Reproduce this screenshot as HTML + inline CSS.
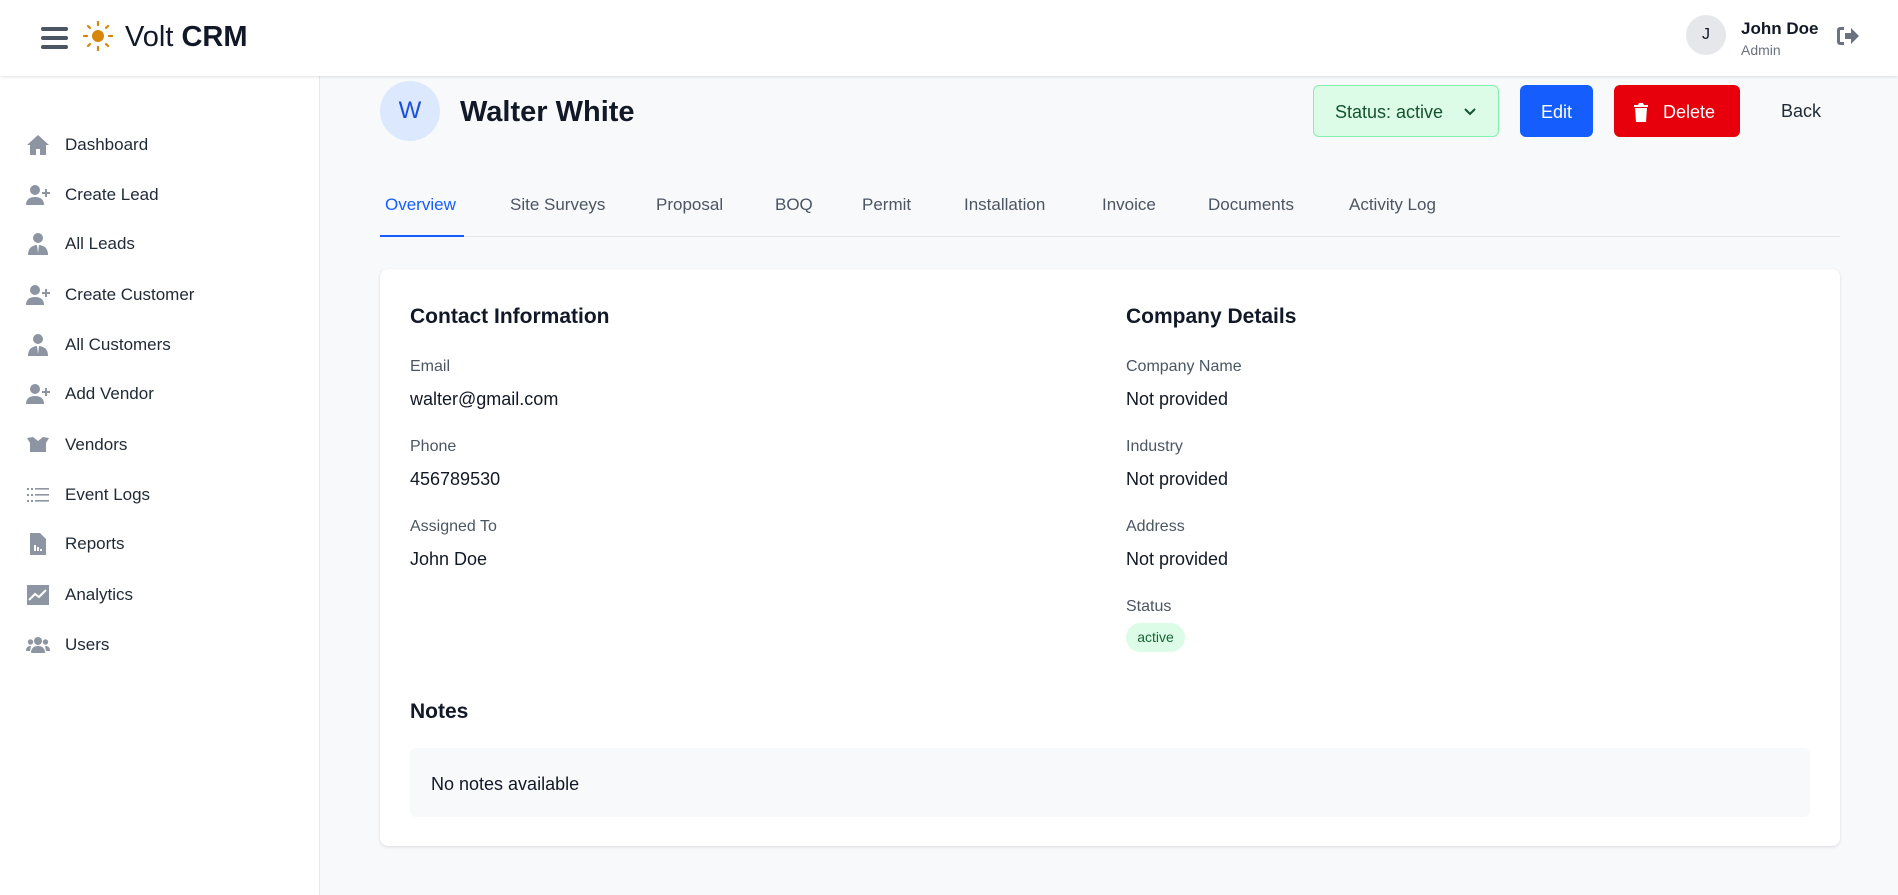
<!DOCTYPE html>
<html><head><meta charset="utf-8"><style>
*{box-sizing:border-box;margin:0;padding:0}
body{width:1898px;height:895px;overflow:hidden;background:#f8f9fb;font-family:"Liberation Sans",sans-serif;color:#111827;position:relative}
.abs{position:absolute}
header{position:absolute;left:0;top:0;width:1898px;height:76px;background:#fff;box-shadow:0 1px 3px rgba(0,0,0,.12);z-index:2}
aside{position:absolute;left:0;top:76px;width:320px;height:819px;background:#fff;border-right:1px solid #e5e7eb}
.nav{position:absolute;left:0;height:30px;display:flex;align-items:center;font-size:17px;color:#1f2937}
.nav svg{position:absolute;left:26px;width:24px;height:24px;fill:#8d95a3}
.nav span{position:absolute;left:65px;white-space:nowrap}
.tab{position:absolute;top:195px;font-size:17px;color:#4b5563}
.lbl{position:absolute;font-size:16px;color:#4b5563}
.val{position:absolute;font-size:18px;color:#111827}
.h{position:absolute;font-size:21px;font-weight:bold;color:#111827}
</style></head><body>
<header>
 <div class="abs" style="left:41px;top:27px;width:27px;height:4px;background:#4b5563;border-radius:2px"></div>
 <div class="abs" style="left:41px;top:36px;width:27px;height:4px;background:#4b5563;border-radius:2px"></div>
 <div class="abs" style="left:41px;top:45px;width:27px;height:4px;background:#4b5563;border-radius:2px"></div>
 <svg class="abs" style="left:83px;top:21px" width="30" height="30" viewBox="0 0 30 30"><circle cx="15" cy="15" r="6" fill="#d4870a"/><g stroke="#d4870a" stroke-width="2.2" stroke-linecap="round"><line x1="15" y1="1" x2="15" y2="4"/><line x1="15" y1="26" x2="15" y2="29"/><line x1="1" y1="15" x2="4" y2="15"/><line x1="26" y1="15" x2="29" y2="15"/><line x1="5" y1="5" x2="7" y2="7"/><line x1="23" y1="23" x2="25" y2="25"/><line x1="25" y1="5" x2="23" y2="7"/><line x1="5" y1="25" x2="7" y2="23"/></g></svg>
 <div class="abs" style="left:125px;top:21px;font-size:29px;color:#111827;white-space:nowrap;font-weight:300">Volt <b style="font-weight:bold">CRM</b></div>
 <div class="abs" style="left:1686px;top:15px;width:40px;height:40px;border-radius:50%;background:#e5e7eb;text-align:center;line-height:40px;font-size:16px">J</div>
 <div class="abs" style="left:1741px;top:19px;font-size:17px;font-weight:bold">John Doe</div>
 <div class="abs" style="left:1741px;top:42px;font-size:14px;color:#6b7280">Admin</div>
 <svg class="abs" style="left:1836px;top:25px" width="24" height="22" viewBox="0 0 24 22"><path d="M8 2H4a3 3 0 0 0-3 3v12a3 3 0 0 0 3 3h4v-3H4V5h4z" fill="#6b7280"/><path d="M9 8h6V3l8 8-8 8v-5H9z" fill="#6b7280"/></svg>
</header>
<aside>
 <div class="nav" style="top:54px"><svg viewBox="0 0 24 24"><path d="M12 2L1 12h3v10h6v-6h4v6h6V12h3z"/></svg><span>Dashboard</span></div>
 <div class="nav" style="top:104px"><svg viewBox="0 0 24 24"><circle cx="9" cy="7" r="5"/><path d="M0 22c0-6 4-8 9-8s9 2 9 8z"/><path d="M19 6h2v3h3v2h-3v3h-2v-3h-3V9h3z"/></svg><span>Create Lead</span></div>
 <div class="nav" style="top:153px"><svg viewBox="0 0 24 24"><circle cx="12" cy="6" r="5"/><path d="M2 23c0-7 4-10 10-10s10 3 10 10z"/><path d="M11 13h2l-1 8z" fill="#fff"/></svg><span>All Leads</span></div>
 <div class="nav" style="top:204px"><svg viewBox="0 0 24 24"><circle cx="9" cy="7" r="5"/><path d="M0 22c0-6 4-8 9-8s9 2 9 8z"/><path d="M19 6h2v3h3v2h-3v3h-2v-3h-3V9h3z"/></svg><span>Create Customer</span></div>
 <div class="nav" style="top:254px"><svg viewBox="0 0 24 24"><circle cx="12" cy="6" r="5"/><path d="M2 23c0-7 4-10 10-10s10 3 10 10z"/><path d="M11 13h2l-1 8z" fill="#fff"/></svg><span>All Customers</span></div>
 <div class="nav" style="top:303px"><svg viewBox="0 0 24 24"><circle cx="9" cy="7" r="5"/><path d="M0 22c0-6 4-8 9-8s9 2 9 8z"/><path d="M19 6h2v3h3v2h-3v3h-2v-3h-3V9h3z"/></svg><span>Add Vendor</span></div>
 <div class="nav" style="top:354px"><svg viewBox="0 0 24 24"><path d="M1 5l6-1 5 4 5-4 6 1-3 5v9H4v-9z"/></svg><span>Vendors</span></div>
 <div class="nav" style="top:404px"><svg viewBox="0 0 24 24"><g fill="#8d95a3"><rect x="1" y="5" width="2" height="2"/><rect x="5" y="5" width="2" height="2"/><rect x="9" y="5" width="14" height="1.6"/><rect x="1" y="11" width="2" height="2"/><rect x="5" y="11" width="2" height="2"/><rect x="9" y="11" width="14" height="1.6"/><rect x="1" y="17" width="2" height="2"/><rect x="5" y="17" width="2" height="2"/><rect x="9" y="17" width="14" height="1.6"/></g></svg><span>Event Logs</span></div>
 <div class="nav" style="top:453px"><svg viewBox="0 0 24 24"><path d="M4 1h10l6 6v16H4z"/><path d="M8 13h2v6H8zM11 15h2v4h-2zM14 17h2v2h-2z" fill="#fff"/></svg><span>Reports</span></div>
 <div class="nav" style="top:504px"><svg viewBox="0 0 24 24"><path d="M1 2h22v20H1z"/><path d="M3 17l6-6 4 3 7-7" stroke="#fff" stroke-width="2" fill="none"/></svg><span>Analytics</span></div>
 <div class="nav" style="top:554px"><svg viewBox="0 0 24 24"><circle cx="12" cy="8" r="4"/><circle cx="4.5" cy="9" r="2.7"/><circle cx="19.5" cy="9" r="2.7"/><path d="M5 20c0-5 3-7 7-7s7 2 7 7z"/><path d="M0 18c0-4 2-5 5-5l-1 5zM24 18c0-4-2-5-5-5l1 5z"/></svg><span>Users</span></div>
</aside>

<div class="abs" style="left:380px;top:81px;width:60px;height:60px;border-radius:50%;background:#dbe8fd;color:#1d4ed8;text-align:center;line-height:60px;font-size:24px">W</div>
<div class="abs" style="left:460px;top:96px;font-size:29px;font-weight:bold;color:#111827">Walter White</div>

<div class="abs" style="left:1313px;top:85px;width:186px;height:52px;border:1px solid #86efac;background:#dcfce7;border-radius:6px;color:#14532d;font-size:18px;line-height:52px;padding-left:21px">Status: active<svg style="position:absolute;left:149px;top:21px" width="14" height="10" viewBox="0 0 14 10"><path d="M2 2l5 5 5-5" stroke="#14532d" stroke-width="2" fill="none"/></svg></div>
<div class="abs" style="left:1520px;top:85px;width:73px;height:52px;background:#155dfc;border-radius:6px;color:#fff;font-size:18px;line-height:54px;text-align:center">Edit</div>
<div class="abs" style="left:1614px;top:85px;width:126px;height:52px;background:#e7000b;border-radius:6px;color:#fff;font-size:18px;line-height:54px;padding-left:49px"><svg style="position:absolute;left:19px;top:18px" width="16" height="19" viewBox="0 0 16 19"><path d="M1 2h4l1-2h4l1 2h4v2H1zM2 5h12l-1 14H3z" fill="#fff"/></svg>Delete</div>
<div class="abs" style="left:1781px;top:101px;font-size:18px;color:#1f2937">Back</div>

<div class="tab" style="left:385px;color:#155dfc">Overview</div>
<div class="tab" style="left:510px">Site Surveys</div>
<div class="tab" style="left:656px">Proposal</div>
<div class="tab" style="left:775px">BOQ</div>
<div class="tab" style="left:862px">Permit</div>
<div class="tab" style="left:964px">Installation</div>
<div class="tab" style="left:1102px">Invoice</div>
<div class="tab" style="left:1208px">Documents</div>
<div class="tab" style="left:1349px">Activity Log</div>
<div class="abs" style="left:380px;top:236px;width:1460px;height:1px;background:#e5e7eb"></div>
<div class="abs" style="left:380px;top:235px;width:84px;height:2px;background:#155dfc"></div>

<div class="abs" style="left:380px;top:269px;width:1460px;height:577px;background:#fff;border-radius:8px;box-shadow:0 1px 3px rgba(0,0,0,.12)"></div>
<div class="h" style="left:410px;top:305px">Contact Information</div>
<div class="lbl" style="left:410px;top:358px">Email</div>
<div class="val" style="left:410px;top:389px">walter@gmail.com</div>
<div class="lbl" style="left:410px;top:438px">Phone</div>
<div class="val" style="left:410px;top:469px">456789530</div>
<div class="lbl" style="left:410px;top:518px">Assigned To</div>
<div class="val" style="left:410px;top:549px">John Doe</div>

<div class="h" style="left:1126px;top:305px">Company Details</div>
<div class="lbl" style="left:1126px;top:358px">Company Name</div>
<div class="val" style="left:1126px;top:389px">Not provided</div>
<div class="lbl" style="left:1126px;top:438px">Industry</div>
<div class="val" style="left:1126px;top:469px">Not provided</div>
<div class="lbl" style="left:1126px;top:518px">Address</div>
<div class="val" style="left:1126px;top:549px">Not provided</div>
<div class="lbl" style="left:1126px;top:598px">Status</div>
<div class="abs" style="left:1126px;top:623px;width:59px;height:29px;border-radius:15px;background:#dcfce7;color:#166534;font-size:14px;line-height:29px;text-align:center">active</div>

<div class="h" style="left:410px;top:700px">Notes</div>
<div class="abs" style="left:410px;top:748px;width:1400px;height:69px;background:#f8f9fb;border-radius:6px"></div>
<div class="val" style="left:431px;top:774px">No notes available</div>
</body></html>
